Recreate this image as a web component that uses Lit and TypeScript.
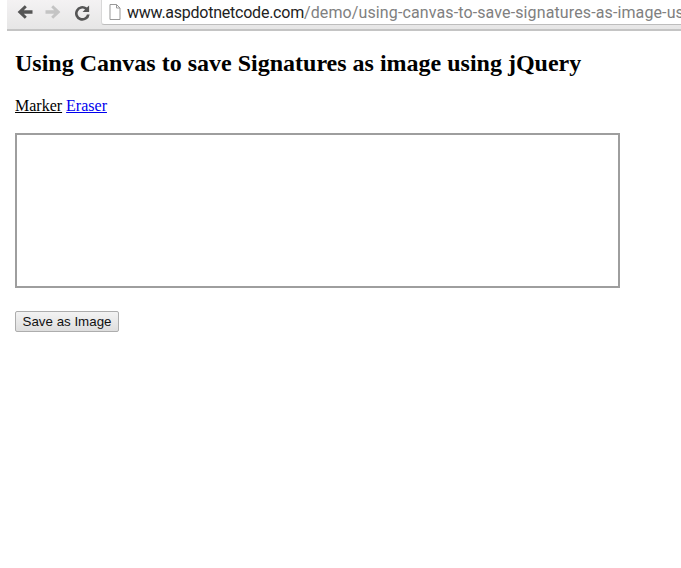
import { LitElement, html, css } from "lit";
import { customElement } from "lit/decorators.js";

@customElement("app-root")
export class AppRoot extends LitElement {
  static styles = css`
    :host { display: block; width: 681px; height: 568px; background: #fff; overflow: hidden; font-family: "Liberation Serif", serif; color: #000; }
    .chrome { display: flex; align-items: flex-start; height: 29px; margin-left: 7px; background: linear-gradient(#f4f2f3, #e6e6e6); border-bottom: 2px solid #c4c4c4; }
    .tools { display: flex; align-items: center; height: 24px; width: 94px; padding-left: 9px; box-sizing: border-box; flex: none; }
    .tools svg { display: block; flex: none; }
    .tools .forward { margin-left: 12px; }
    .tools .reload { margin-left: 12px; }
    .omni { flex: 1; height: 24px; min-width: 0; background: #fff; border-left: 1px solid #d8d8d8; border-bottom: 1px solid #bdbdbd; border-bottom-left-radius: 3px; display: flex; align-items: center; padding-left: 7px; white-space: nowrap; font: 16px Roboto, sans-serif; color: #808080; letter-spacing: 0.12px; }
    .omni svg { flex: none; margin-right: 6px; }
    .host { color: #222; letter-spacing: -0.24px; }
    main { padding: 0 15px; }
    h1 { font-size: 24px; font-weight: bold; margin: 18px 0 0; line-height: 28px; }
    p { margin: 20px 0 0; font-size: 16px; line-height: 18px; }
    a { text-decoration: underline; }
    .marker { color: #000; }
    .eraser { color: #00e; }
    .pad { width: 605px; height: 155px; box-sizing: border-box; border: 2px solid #9e9e9e; margin-top: 18px; }
    .save { display: block; margin-top: 23px; width: 104px; height: 21px; padding: 0; box-sizing: border-box; border: 1px solid #adadad; border-radius: 2px; background: linear-gradient(#f3f3f3, #dedede); font: 13.33px "Liberation Sans", sans-serif; color: #111; }
  `;

  render() {
    return html`
      <div class="chrome">
        <div class="tools">
          <svg width="17" height="16" viewBox="0 0 17 16"><path d="M16.500 6.300H7.800l3-3L8.800 1.200 1.600 8l7.200 6.800 2-2.100-3-3h8.700z" fill="#555"/></svg>
          <svg class="forward" width="17" height="16" viewBox="0 0 17 16"><path d="M.5 6.300h8.700l-3-3 2-2.100L15.400 8l-7.200 6.800-2-2.100 3-3H.5z" fill="#c4c4c4"/></svg>
          <svg class="reload" width="17" height="17" viewBox="0 0 18 18"><path d="M16 1.500v7h-7l2.700-2.700A5 5 0 1 0 13.700 11h2.900A7.800 7.800 0 1 1 13.700 3.800z" fill="#555"/></svg>
        </div>
        <div class="omni">
          <svg width="12" height="16" viewBox="0 0 12 16"><path d="M1 .5h6.500L11 4v11.500H1z" fill="#fff" stroke="#999"/><path d="M7.500 .5V4H11" fill="none" stroke="#999"/></svg>
          <span><span class="host">www.aspdotnetcode.com</span>/demo/using-canvas-to-save-signatures-as-image-us</span>
        </div>
      </div>
      <main>
        <h1>Using Canvas to save Signatures as image using jQuery</h1>
        <p><a class="marker" href="#">Marker</a> <a class="eraser" href="#">Eraser</a></p>
        <div class="pad"></div>
        <button class="save">Save as Image</button>
      </main>
    `;
  }
}
